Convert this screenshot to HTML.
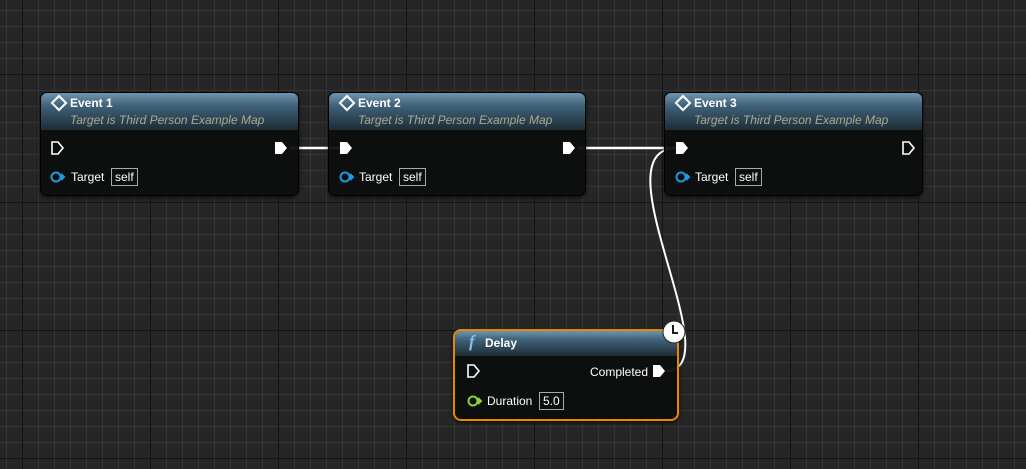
<!DOCTYPE html>
<html><head><meta charset="utf-8"><style>
html,body{margin:0;padding:0;}
body{width:1026px;height:469px;overflow:hidden;position:relative;font-family:"Liberation Sans",sans-serif;
background-color:#262626;
background-image:
linear-gradient(to right,#141414 0 1px,transparent 1px),
linear-gradient(to bottom,#141414 0 1px,transparent 1px),
linear-gradient(to right,#353535 0 1px,transparent 1px),
linear-gradient(to bottom,#353535 0 1px,transparent 1px);
background-size:128px 128px,128px 128px,16px 16px,16px 16px;
background-position:22px 74px,22px 74px,6px 10px,6px 10px;}
.node{position:absolute;background:rgba(12,14,13,0.94);border:1px solid #000;border-radius:7px;box-shadow:0 2px 4px rgba(0,0,0,.6);overflow:hidden;}
.hdr{height:37px;background:linear-gradient(to bottom,#6f95ae 0%,#3f6178 35%,#1e2c35 100%);position:relative;}
.hdr .t{position:absolute;left:29px;top:3px;color:#fff;font-weight:bold;font-size:12px;}
.hdr .s{position:absolute;left:29px;top:20px;color:#a8ad90;font-style:italic;font-size:12px;}
.dia{position:absolute;left:12px;top:4px;width:8px;height:8px;border:2px solid #fff;transform:rotate(45deg);}
.lbl{position:absolute;color:#fff;font-size:12px;}
.box{position:absolute;border:1px solid #aaa;color:#fff;font-size:12px;padding:0 3px;height:16px;line-height:16px;}
svg.ov{position:absolute;left:0;top:0;}
</style></head><body>
<svg class="ov" width="1026" height="469" style="z-index:0">
<path d="M290 148 L340 148" stroke="#fff" stroke-width="2.5" fill="none"/>
<path d="M578 148 L677 148" stroke="#fff" stroke-width="2.5" fill="none"/>
<path d="M665 371 C 735 371 595 148 677 148" stroke="#fff" stroke-width="2" fill="none"/>
</svg>

<div class="node" style="left:40px;top:92px;width:257px;height:102px;">
<div class="hdr"><div class="dia"></div><div class="t">Event 1</div><div class="s">Target is Third Person Example Map</div></div>
</div>
<div class="node" style="left:328px;top:92px;width:256px;height:102px;">
<div class="hdr"><div class="dia"></div><div class="t">Event 2</div><div class="s">Target is Third Person Example Map</div></div>
</div>
<div class="node" style="left:664px;top:92px;width:257px;height:102px;">
<div class="hdr"><div class="dia"></div><div class="t">Event 3</div><div class="s">Target is Third Person Example Map</div></div>
</div>
<div class="node" style="left:453px;top:329px;width:222px;height:88px;border:2px solid #e48a00;border-radius:8px;">
<div class="hdr" style="height:25px;"><div class="t" style="top:5px;left:30px;">Delay</div>
<div style="position:absolute;left:14px;top:1px;color:#7ec2f0;font-family:'Liberation Serif',serif;font-style:italic;font-weight:bold;font-size:17px;">f</div></div>
</div>

<svg class="ov" width="1026" height="469" style="z-index:2">
<g fill="none" stroke="#fff" stroke-width="1.6">
<path d="M52 142 h6 l5 6 l-5 6 h-6 z"/>
<path d="M903 142 h6 l5 6 l-5 6 h-6 z"/>
<path d="M468 365 h6 l5 6 l-5 6 h-6 z"/>
</g>
<g fill="#fff">
<path d="M275 142 h7 l5 6 l-5 6 h-7 z"/>
<path d="M340 142 h7 l5 6 l-5 6 h-7 z"/>
<path d="M563 142 h7 l5 6 l-5 6 h-7 z"/>
<path d="M676 142 h7 l5 6 l-5 6 h-7 z"/>
<path d="M653 365 h7 l5 6 l-5 6 h-7 z"/>
</g>
<g fill="none" stroke="#1e9ade" stroke-width="2">
<circle cx="56" cy="177" r="4.5"/><path d="M61 174 l3 3 l-3 3" fill="#1e9ade"/>
<circle cx="345" cy="177" r="4.5"/><path d="M350 174 l3 3 l-3 3" fill="#1e9ade"/>
<circle cx="681" cy="177" r="4.5"/><path d="M686 174 l3 3 l-3 3" fill="#1e9ade"/>
</g>
<g fill="none" stroke="#8cd03a" stroke-width="2">
<circle cx="473" cy="401" r="4.5"/><path d="M478 398 l3 3 l-3 3" fill="#8cd03a"/>
</g>
<circle cx="674" cy="332" r="11" fill="#fff" stroke="#222" stroke-width="1"/>
<path d="M673 325 v8 h5" stroke="#000" stroke-width="1.8" fill="none"/>
</svg>

<div style="position:absolute;left:0;top:0;z-index:3">
<div class="lbl" style="left:71px;top:170px;">Target</div><div class="box" style="left:111px;top:168px;">self</div>
<div class="lbl" style="left:359px;top:170px;">Target</div><div class="box" style="left:399px;top:168px;">self</div>
<div class="lbl" style="left:695px;top:170px;">Target</div><div class="box" style="left:735px;top:168px;">self</div>
<div class="lbl" style="left:590px;top:365px;">Completed</div>
<div class="lbl" style="left:487px;top:394px;">Duration</div><div class="box" style="left:539px;top:392px;">5.0</div>
</div>
</body></html>
